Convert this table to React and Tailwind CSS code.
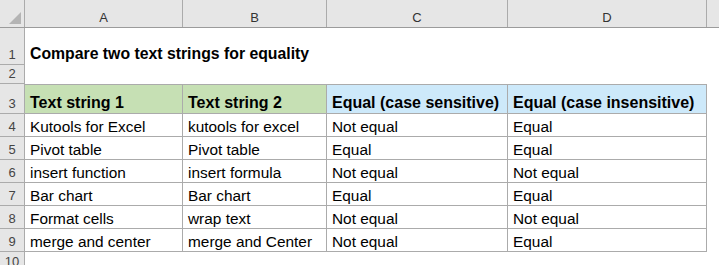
const cols = ['A', 'B', 'C', 'D'];
const colW = ['w-[158px]', 'w-[144px]', 'w-[181px]', 'w-[199px]'];

const rows = [
  ['Kutools for Excel', 'kutools for excel', 'Not equal', 'Equal'],
  ['Pivot table', 'Pivot table', 'Equal', 'Equal'],
  ['insert function', 'insert formula', 'Not equal', 'Not equal'],
  ['Bar chart', 'Bar chart', 'Equal', 'Equal'],
  ['Format cells', 'wrap text', 'Not equal', 'Not equal'],
  ['merge and center', 'merge and Center', 'Not equal', 'Equal'],
];

const heads = [
  ['Text string 1', 'bg-[#c6e0b4]'],
  ['Text string 2', 'bg-[#c6e0b4]'],
  ['Equal (case sensitive)', 'bg-[#cde9fa]'],
  ['Equal (case insensitive)', 'bg-[#cde9fa]'],
];

function RowLabel({ n, h }) {
  return (
    <div className={`w-[25px] shrink-0 ${h} bg-[#e6e6e6] border-r border-b border-[#ababab] flex items-end justify-center text-[13px] text-[#444] leading-none pb-[3px]`}>
      {n}
    </div>
  );
}

export default function App() {
  return (
    <div className="w-[719px] h-[265px] overflow-hidden bg-white text-black text-[15.4px]" style={{ fontFamily: '"Liberation Sans", Arial, sans-serif' }}>
      {/* column headers */}
      <div className="flex h-[28px] bg-[#e6e6e6] border-b border-[#9b9b9b]">
        <div className="w-[25px] shrink-0 border-r border-[#ababab] relative">
          <div className="absolute right-[3px] bottom-[3px] w-0 h-0 border-l-[12px] border-l-transparent border-b-[12px] border-b-[#b4b4b4]" />
        </div>
        {cols.map((c, i) => (
          <div key={c} className={`${colW[i]} shrink-0 border-r border-[#ababab] flex items-center justify-center text-[13px] text-[#333] pt-[9px]`}>
            {c}
          </div>
        ))}
        <div className="flex-1" />
      </div>

      {/* row 1 */}
      <div className="flex h-[37px]">
        <RowLabel n="1" h="h-[37px]" />
        <div className="flex-1 flex items-end pl-[5px] pb-[3px] font-bold text-[15.8px] leading-none">Compare two text strings for equality</div>
      </div>

      {/* row 2 */}
      <div className="flex h-[19px]">
        <RowLabel n="2" h="h-[19px]" />
        <div className="flex-1" />
      </div>

      {/* row 3 headers */}
      <div className="flex h-[30px]">
        <RowLabel n="3" h="h-[30px]" />
        {heads.map(([t, bg], i) => (
          <div key={t} className={`${colW[i]} shrink-0 ${bg} border-r border-b border-t border-[#ababab] flex items-end pl-[5px] pb-[2px] font-bold leading-none text-[16px]`}>
            {t}
          </div>
        ))}
      </div>

      {/* data rows */}
      {rows.map((r, ri) => (
        <div key={ri} className="flex h-[23px]">
          <RowLabel n={ri + 4} h="h-[23px]" />
          {r.map((v, i) => (
            <div key={i} className={`${colW[i]} shrink-0 border-r border-b border-[#ababab] flex items-end pl-[5px] pb-[2px] leading-none`}>
              {v}
            </div>
          ))}
        </div>
      ))}

      {/* row 10 */}
      <div className="flex h-[20px]">
        <RowLabel n="10" h="h-[20px]" />
        <div className="flex-1" />
      </div>
    </div>
  );
}
